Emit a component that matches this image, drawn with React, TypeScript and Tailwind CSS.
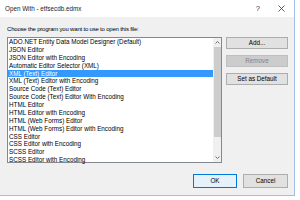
import React from "react";

const items = [
  "ADO.NET Entity Data Model Designer (Default)",
  "JSON Editor",
  "JSON Editor with Encoding",
  "Automatic Editor Selector (XML)",
  "XML (Text) Editor",
  "XML (Text) Editor with Encoding",
  "Source Code (Text) Editor",
  "Source Code (Text) Editor With Encoding",
  "HTML Editor",
  "HTML Editor with Encoding",
  "HTML (Web Forms) Editor",
  "HTML (Web Forms) Editor with Encoding",
  "CSS Editor",
  "CSS Editor with Encoding",
  "SCSS Editor",
  "SCSS Editor with Encoding",
];

export default function App() {
  return (
    <div
      className="w-[300px] h-[200px] bg-white overflow-hidden text-[6.3px] text-black"
      style={{ fontFamily: '"Liberation Sans", Arial, sans-serif' }}
    >
      <div className="w-[295px] h-[196px] border-r border-b border-[#9fc0e4] flex flex-col bg-[#f0f0f0]">
        <div className="h-[17px] bg-white flex items-center pl-[5px] shrink-0">
          <span className="text-[#222]">Open With - etfsecdb.edmx</span>
          <span className="ml-auto text-[7.5px] text-[#333] mr-[18px]">?</span>
          <svg width="7" height="7" viewBox="0 0 7 7" className="mr-[9px]">
            <path d="M0.5 0.5 L6.5 6.5 M6.5 0.5 L0.5 6.5" stroke="#333" strokeWidth="0.8" />
          </svg>
        </div>
        <div className="flex-1 pl-[7px] pr-[6px] pt-[5px]">
          <div className="h-[15px] flex items-center text-[6px] tracking-[-0.2px]">
            Choose the program you want to use to open this file:
          </div>
          <div className="flex gap-[4px]">
            <div className="w-[215px] h-[126px] border border-[#828790] bg-white flex">
              <div className="flex-1 flex flex-col">
                {items.map((it, i) => (
                  <div
                    key={i}
                    className={
                      "h-[7.875px] leading-[7.875px] pl-[1px] whitespace-nowrap " +
                      (i === 4 ? "bg-[#3399ff] text-white" : "")
                    }
                  >
                    {it}
                  </div>
                ))}
              </div>
              <div className="w-[8px] bg-[#f0f0f0] flex flex-col items-center">
                <div className="h-[9px] flex items-center justify-center">
                  <svg width="5" height="3" viewBox="0 0 5 3">
                    <path d="M0.5 2.5 L2.5 0.5 L4.5 2.5" stroke="#606060" strokeWidth="0.9" fill="none" />
                  </svg>
                </div>
                <div className="w-[7px] h-[90px] bg-[#cdcdcd]" />
                <div className="flex-1" />
                <div className="h-[9px] flex items-center justify-center">
                  <svg width="5" height="3" viewBox="0 0 5 3">
                    <path d="M0.5 0.5 L2.5 2.5 L4.5 0.5" stroke="#606060" strokeWidth="0.9" fill="none" />
                  </svg>
                </div>
              </div>
            </div>
            <div className="w-[62px] flex flex-col gap-[6px]">
              <div className="h-[12px] border border-[#adadad] bg-[#e1e1e1] flex items-center justify-center">
                Add...
              </div>
              <div className="h-[12px] border border-[#bfbfbf] bg-[#cccccc] text-[#838383] flex items-center justify-center">
                Remove
              </div>
              <div className="h-[12px] border border-[#adadad] bg-[#e1e1e1] flex items-center justify-center">
                Set as Default
              </div>
            </div>
          </div>
          <div className="flex justify-end gap-[6px] mt-[11px]">
            <div className="w-[44px] h-[14px] border border-[#0078d7] bg-[#e5f1fb] flex items-center justify-center">
              OK
            </div>
            <div className="w-[45px] h-[14px] border border-[#adadad] bg-[#e1e1e1] flex items-center justify-center">
              Cancel
            </div>
          </div>
        </div>
      </div>
    </div>
  );
}
